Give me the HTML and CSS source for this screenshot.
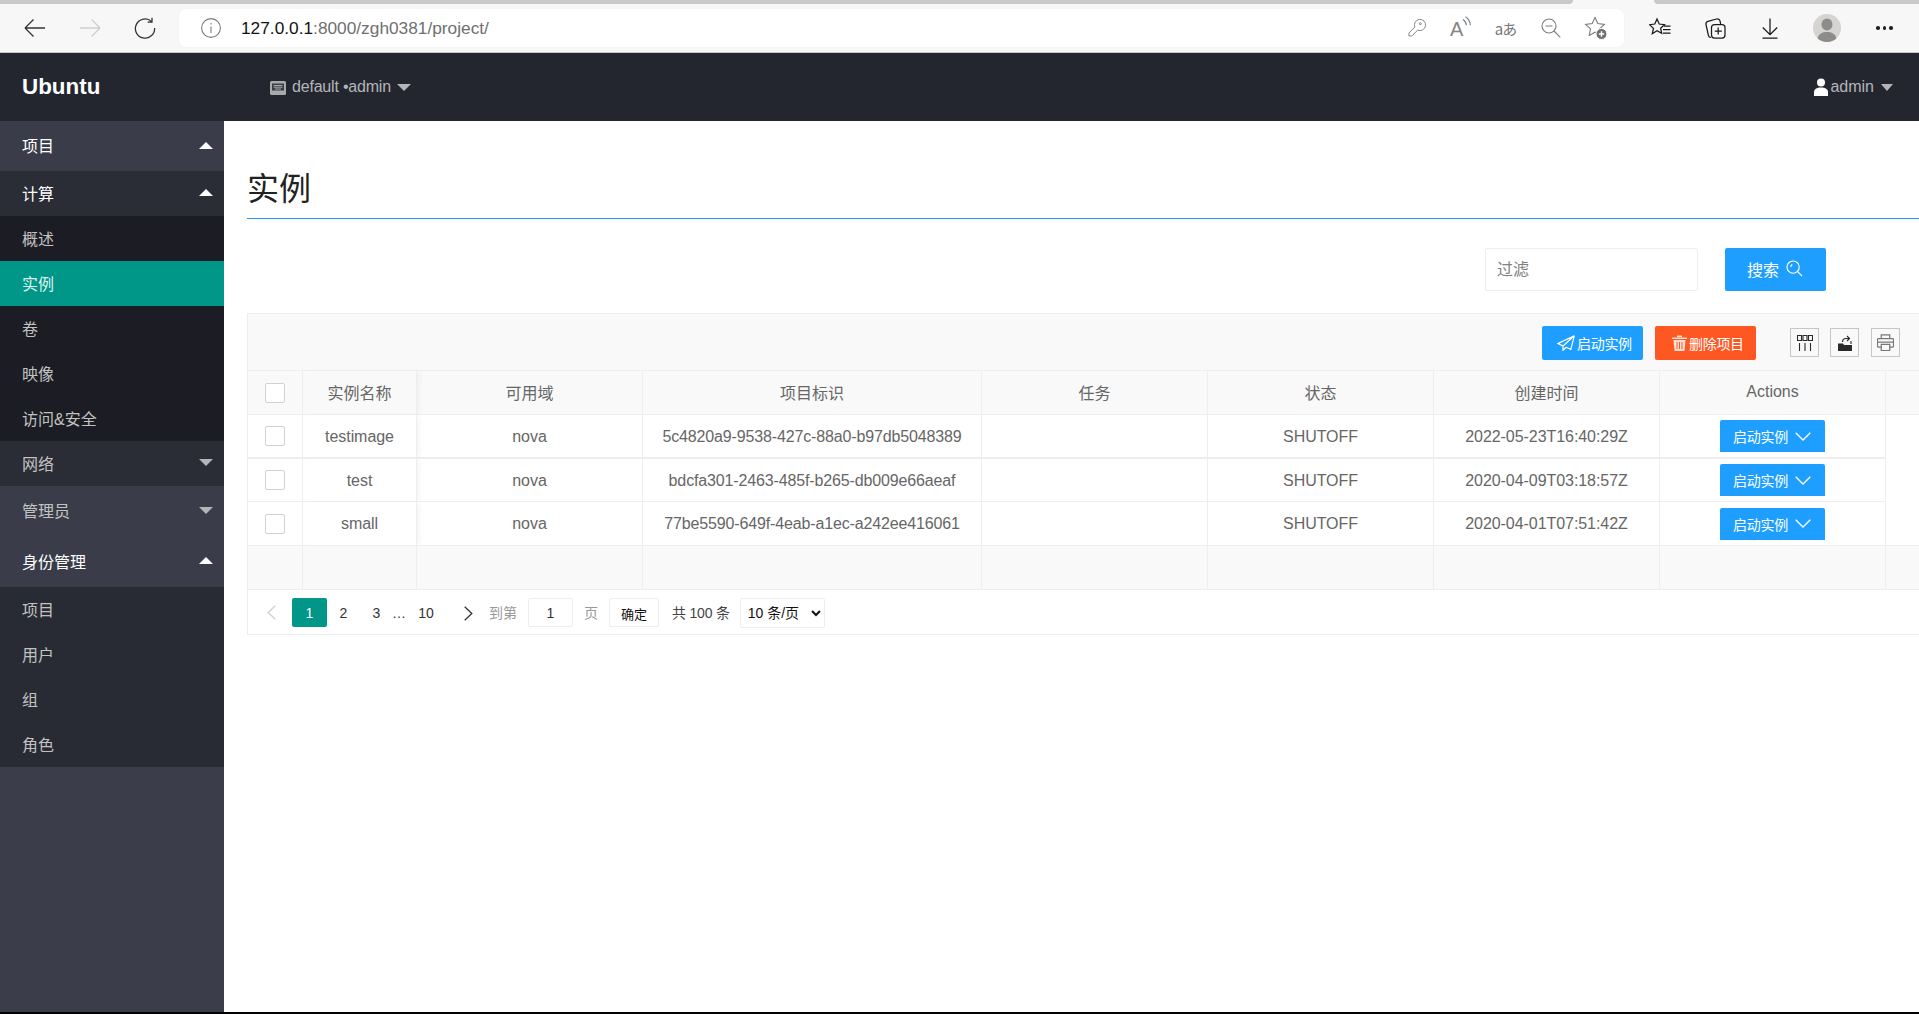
FILE: index.html
```html
<!DOCTYPE html>
<html lang="zh">
<head>
<meta charset="utf-8">
<title>实例</title>
<link rel="stylesheet" href="styles.css">
</head>
<body>
<div class="page">
  <div class="browser">
    <div class="tabstrip"><div class="tab-l"></div><div class="tab-gap"></div><div class="tab-r"></div></div>
    <div class="toolbar">
      <span class="nav"><svg class="ic22" viewBox="0 0 22 22"><path class="st-dark" d="M1 11h20M1 11l8.500-8.500M1 11l8.500 8.500"/></svg></span>
      <span class="nav"><svg class="ic22" viewBox="0 0 22 22"><path class="st-off" d="M1 11h20M21 11l-8.500-8.500M21 11l-8.500 8.500"/></svg></span>
      <span class="nav"><svg class="ic22" viewBox="0 0 22 22"><path class="st-dark" d="M17.600 4.600A9.600 9.600 0 1 0 20.600 11M18 .8v4.400h-4.400"/></svg></span>
      <div class="omnibox">
        <svg class="ic20 info" viewBox="0 0 20 20"><circle class="st-grey" cx="10" cy="10" r="9.400"/><path class="st-grey" d="M10 8.500v6.500M10 5v1.400"/></svg>
        <span class="url"><b>127.0.0.1</b>:8000/zgh0381/project/</span>
        <span class="omni-ic"><svg class="ic20" viewBox="0 0 24 24"><path class="st-grey" d="M10.600 10.900a6.700 6.700 0 1 1 3.500 3.600L7 21.500H3.500V18z"/><circle class="st-grey" cx="17.200" cy="6.800" r="1.200"/></svg></span>
        <span class="omni-ic"><svg class="ic24" viewBox="0 0 24 24"><text class="aloud" x="1" y="20">A</text><path class="st-grey" d="M14 3.500c2.100 1.400 3.200 3.300 3.400 5.800M16.500.8c3 2 4.600 4.800 4.900 8.500"/></svg></span>
        <span class="omni-ic translate">aあ</span>
        <span class="omni-ic"><svg class="ic20" viewBox="0 0 20 20"><circle class="st-grey" cx="8" cy="8" r="7"/><path class="st-grey" d="M4.500 8h7M13 13l6.300 6.300"/></svg></span>
        <span class="omni-ic"><svg class="ic24" viewBox="0 0 24 24"><path class="st-grey" d="M11 1.500 13.800 7.600 20.400 8.400 15.500 12.900 16.800 19.400 11 16.200 5.200 19.400 6.500 12.900 1.600 8.400 8.200 7.600z"/><circle class="badge" cx="17.500" cy="18" r="5.500"/><path class="st-white" d="M14.800 18h5.400M17.500 15.300v5.400"/></svg></span>
      </div>
      <span class="nav first"><svg class="ic22" viewBox="0 0 22 22"><path class="st-black" d="M8 2 10.200 7 15.500 7.600 11.600 11.200 12.700 16.400 8 13.800 3.300 16.700 4.500 11.400.5 7.700 5.800 7zM15 9h6.500M14 12.500h7.500M14 16h7.500"/></svg></span>
      <span class="nav"><svg class="ic22" viewBox="0 0 22 22"><rect class="st-black" x="7.500" y="7.500" width="13.500" height="13.500" rx="3"/><path class="st-black" d="M14.200 10.500v7M10.800 14h7M7 20.500c-1.500-.1-2.300-1-2.600-2.200L2 7.500c-.3-1.500.5-2.800 2-3.200L12.500 2c1.700-.4 3.200.5 3.600 2.200l.5 2.800"/></svg></span>
      <span class="nav"><svg class="ic22" viewBox="0 0 22 22"><path class="st-black" d="M11 1.500v16M3.800 10.500l7.200 7.200 7.200-7.200M3.500 21h15"/></svg></span>
      <span class="nav avatar-wrap"><svg class="avatar" viewBox="0 0 28 28"><circle class="av-bg" cx="14" cy="14" r="14"/><ellipse class="av-fg" cx="14" cy="10.500" rx="5.500" ry="6"/><path class="av-fg" d="M4.600 24.500c1-5 5-6.500 9.400-6.500s8.400 1.500 9.400 6.500A14 14 0 0 1 14 28a14 14 0 0 1-9.400-3.500z"/></svg></span>
      <span class="nav dots"><i></i><i></i><i></i></span>
    </div>
  </div>

  <header class="topbar">
    <div class="logo">Ubuntu</div>
    <div class="proj">
      <svg class="kbd" viewBox="0 0 16 14"><rect class="kbd-a" x="0" y="0" width="16" height="14" rx="1.500"/><rect class="kbd-b" x="2" y="2.500" width="12" height="7"/><path class="kbd-c" d="M3.500 4.500h9M3.500 6.200h9M5 8h6"/></svg>
      <span class="proj-name">default •admin</span><i class="caret down"></i>
    </div>
    <div class="user">
      <svg class="usr" viewBox="0 0 14 18"><circle cx="7" cy="4.500" r="4"/><path d="M0 18v-3.500C0 11 2.500 9.500 7 9.500s7 1.500 7 5V18z"/></svg>
      <span>admin</span><i class="caret down small"></i>
    </div>
  </header>

  <div class="body">
    <nav class="side">
      <div class="group g-a h50 open">项目<i class="caret up"></i></div>
      <div class="group g-b h45 open">计算<i class="caret up"></i></div>
      <div class="sub s-dark">
        <a>概述</a><a class="on">实例</a><a>卷</a><a>映像</a><a>访问&amp;安全</a>
      </div>
      <div class="group g-b h45">网络<i class="caret down"></i></div>
      <div class="group g-a h50">管理员<i class="caret down"></i></div>
      <div class="group g-a h51 open">身份管理<i class="caret up"></i></div>
      <div class="sub s-mid">
        <a>项目</a><a>用户</a><a>组</a><a>角色</a>
      </div>
    </nav>

    <main class="main">
      <h1 class="title">实例</h1>

      <form class="search">
        <input class="filter" type="text" placeholder="过滤">
        <button class="btn-search" type="button">搜索<svg class="ic17" viewBox="0 0 18 18"><circle class="st-w" cx="7.500" cy="7.500" r="6.500"/><path class="st-w" d="M12.200 12.200l4.800 4.800M5 7.500c0-1.200.6-2.200 1.700-2.600"/></svg></button>
      </form>

      <section class="card">
        <div class="tools">
          <button class="tbtn blue" type="button"><svg class="plane" viewBox="0 0 18 16"><path class="st-w" d="M17.300.8.900 8.600l5.100 2.500zM17.300.8 6 11.100v4.200l3.300-3M17.300.8 13.800 14.500 9.300 12.300"/></svg>启动实例</button>
          <button class="tbtn orange" type="button"><svg class="trash" viewBox="0 0 15 16"><path class="fill-w" d="M0 2.500h15v1.500H0zM5 .5h5v1.500H5z"/><path class="fill-w" d="M1.500 5h12l-1 11h-10zM4.500 7v7h1V7zm2.500 0v7h1V7zm2.500 0v7h1V7z"/></svg>删除项目</button>
          <span class="ibtn first"><svg class="ic16" viewBox="0 0 16 16"><path class="st-ink" d="M.5.500h4v5h-4zM6 .500h4v5H6zM11.500.500h4v5h-4zM2.500 8v8M8 8v8M13.500 8v8"/></svg></span>
          <span class="ibtn"><svg class="ic16" viewBox="0 0 16 16"><path class="fill-ink" d="M1 8.500h5l1 1.500h8v6H1z"/><path class="st-ink" d="M5.500 7c0-2 1.200-3.500 3.500-3.500h3M10 1l2.500 2.500L10 6M14 9V6"/></svg></span>
          <span class="ibtn wide"><svg class="ic17" viewBox="0 0 18 18"><path class="st-print" d="M4.500 5V1h9v4M4.500 14H1.500c-.6 0-1-.4-1-1V6c0-.6.4-1 1-1h15c.6 0 1 .4 1 1v7c0 .6-.4 1-1 1h-3"/><path class="st-print" d="M4.500 11h9v6.500h-9zM.5 8.500h17"/></svg></span>
        </div>

        <table class="grid">
          <colgroup>
            <col class="c-check"><col class="c-name"><col class="c-wide"><col class="c-id"><col class="c-wide"><col class="c-wide"><col class="c-wide"><col class="c-wide"><col class="c-gut">
          </colgroup>
          <thead>
            <tr class="tall">
              <th><span class="cb"></span></th><th class="fix">实例名称</th><th>可用域</th><th>项目标识</th><th>任务</th><th>状态</th><th>创建时间</th><th>Actions</th><th class="gut"></th>
            </tr>
          </thead>
          <tbody>
            <tr class="tall thick">
              <td class="ctl"><span class="cb"></span></td><td class="fix">testimage</td><td>nova</td><td class="uuid">5c4820a9-9538-427c-88a0-b97db5048389</td><td></td><td>SHUTOFF</td><td>2022-05-23T16:40:29Z</td>
              <td class="ctl"><button class="rbtn" type="button">启动实例<svg class="chev" viewBox="0 0 16 9"><path d="M.7.7 8 8l7.300-7.300"/></svg></button></td><td class="blank"></td>
            </tr>
            <tr class="short">
              <td class="ctl"><span class="cb"></span></td><td class="fix">test</td><td>nova</td><td class="uuid">bdcfa301-2463-485f-b265-db009e66aeaf</td><td></td><td>SHUTOFF</td><td>2020-04-09T03:18:57Z</td>
              <td class="ctl"><button class="rbtn" type="button">启动实例<svg class="chev" viewBox="0 0 16 9"><path d="M.7.7 8 8l7.300-7.300"/></svg></button></td><td class="blank"></td>
            </tr>
            <tr class="tall">
              <td class="ctl"><span class="cb"></span></td><td class="fix">small</td><td>nova</td><td class="uuid">77be5590-649f-4eab-a1ec-a242ee416061</td><td></td><td>SHUTOFF</td><td>2020-04-01T07:51:42Z</td>
              <td class="ctl"><button class="rbtn" type="button">启动实例<svg class="chev" viewBox="0 0 16 9"><path d="M.7.7 8 8l7.300-7.300"/></svg></button></td><td class="blank last"></td>
            </tr>
            <tr class="tall empty">
              <td></td><td></td><td></td><td></td><td></td><td></td><td></td><td></td><td></td>
            </tr>
          </tbody>
        </table>

        <div class="pager">
          <span class="pg-prev"><svg class="pg-arrow" viewBox="0 0 9 15"><path class="st-off" d="M8.300.8 1.200 7.500l7.100 6.700"/></svg></span>
          <span class="pg cur">1</span>
          <span class="pg w33">2</span>
          <span class="pg w33">3</span>
          <span class="pg w12">…</span>
          <span class="pg w42">10</span>
          <span class="pg w42"><svg class="pg-arrow" viewBox="0 0 9 15"><path class="st-dark" d="M.7.800 7.800 7.500.7 14.200"/></svg></span>
          <span class="lbl goto">到第</span>
          <input class="pg-input" type="text" value="1">
          <span class="lbl ye">页</span>
          <button class="pg-ok" type="button">确定</button>
          <span class="total">共 100 条</span>
          <select class="pg-size"><option>10 条/页</option></select>
        </div>
      </section>
    </main>
  </div>
  <div class="baseline"></div>
</div>
</body>
</html>
```

FILE: styles.css
```css
* { box-sizing: border-box; }
html, body { margin: 0; padding: 0; height: 100%; overflow: hidden; background: #fff; }
body { font-family: "Liberation Sans", "Noto Sans CJK SC", sans-serif; font-size: 16px; color: #666; }
.page { display: flex; flex-direction: column; height: 1014px; width: 1919px; }

/* browser chrome */
.browser { flex: 0 0 53px; background: #f7f7f7; border-bottom: 1px solid #c6c6c6; display: flex; flex-direction: column; }
.tabstrip { flex: 0 0 4px; display: flex; }
.tab-l, .tab-r { background: #c9c9c9; }
.tab-l { flex: 0 0 1573px; border-bottom-right-radius: 5px; }
.tab-gap { flex: 0 0 81px; }
.tab-r { flex: 1; border-bottom-left-radius: 5px; }
.toolbar { flex: 1; display: flex; align-items: center; padding-left: 7px; }
.nav { flex: 0 0 55px; height: 30px; display: flex; align-items: center; justify-content: center; }
.nav.first { margin-left: 8px; }
.avatar-wrap { flex-basis: 60px; }
.ic22 { width: 22px; height: 22px; }
.ic24 { width: 24px; height: 24px; }
.ic20 { width: 20px; height: 20px; }
.ic17 { width: 17px; height: 17px; }
.ic16 { width: 16px; height: 16px; }
svg path, svg circle, svg rect { fill: none; }
.st-dark { stroke: #333; stroke-width: 1.3; }
.st-off { stroke: #cfcfcf; stroke-width: 1.3; }
.st-grey { stroke: #7c7c7c; stroke-width: 1.1; }
.st-black { stroke: #1a1a1a; stroke-width: 1.25; }
.st-white { stroke: #fff; stroke-width: 1.4; }
.st-w { stroke: #fff; stroke-width: 1.2; }
.st-ink { stroke: #2b2b2b; stroke-width: 1.1; }
.st-print { stroke: #777; stroke-width: 1.3; }
svg .badge { fill: #6f6f6f; stroke: #fff; stroke-width: 1; }
svg .fill-w { fill: #ffe0d2; }
svg .fill-ink { fill: #2b2b2b; }
.omnibox { flex: 0 0 1445px; margin-left: 7px; height: 38px; background: #fff; border-radius: 7px; display: flex; align-items: center; padding: 0 6px 0 22px; box-shadow: 0 0 2px rgba(0,0,0,.05); }
.url { flex: 1; margin-left: 20px; font-size: 17.300px; color: #6f6f6f; white-space: nowrap; }
.url b { font-weight: 400; color: #111; }
.omni-ic { flex: 0 0 45px; display: flex; align-items: center; justify-content: center; }
.aloud { font-family: "Liberation Sans", sans-serif; font-size: 20px; fill: #858585; }
.translate { font-family: "Noto Sans CJK JP", sans-serif; font-size: 15px; letter-spacing: -1px; color: #777; }
.avatar { width: 28px; height: 28px; }
svg .av-bg { fill: #d5d4d2; }
svg .av-fg { fill: #8d8c88; }
.dots { gap: 3px; }
.dots i { width: 3.500px; height: 3.500px; border-radius: 50%; background: #222; }

/* top bar */
.topbar { flex: 0 0 68px; background: #23262f; display: flex; align-items: center; color: #b4b5b8; }
.logo { flex: 0 0 270px; padding-left: 22px; font-size: 22.400px; font-weight: 700; color: #fff; }
.proj { display: flex; align-items: center; }
.proj-name { letter-spacing: -.2px; }
.kbd { width: 16px; height: 14px; margin: 2px 6px 0 0; }
svg .kbd-a { fill: #a9aaac; }
svg .kbd-b { fill: #3a3c44; }
.kbd-c { stroke: #c9c9c9; stroke-width: .8; }
.user { margin-left: auto; padding-right: 26px; display: flex; align-items: center; }
.usr { width: 14px; height: 18px; margin-right: 2px; }
svg.usr circle, svg.usr path { fill: #fff; }
.caret { display: inline-block; width: 0; height: 0; border-left: 7px solid transparent; border-right: 7px solid transparent; }
.caret.down { border-top: 7px solid #b4b5b8; }
.caret.up { border-bottom: 7px solid #fff; }
.topbar .caret { margin-left: 6px; margin-top: 1px; }
.topbar .caret.small { border-left-width: 6px; border-right-width: 6px; margin-left: 7px; }

/* sidebar */
.body { flex: 1; display: flex; min-height: 0; }
.side { flex: 0 0 224px; background: #3b3e4a; display: flex; flex-direction: column; }
.group { display: flex; align-items: center; justify-content: space-between; padding: 0 11px 2px 22px; font-size: 16px; color: #c2c2c2; flex: none; }
.group.open { color: #fff; }
.g-a { background: #3a3d49; }
.g-b { background: #2a2c36; }
.h50 { height: 50px; } .h45 { height: 45px; } .h51 { height: 51px; }
.sub { display: flex; flex-direction: column; flex: none; }
.sub a { height: 45px; display: flex; align-items: center; padding: 0 0 1px 22px; color: #c2c2c2; font-size: 16px; }
.s-dark { background: #1c1d24; }
.s-mid { background: #292b34; }
.sub a.on { background: #009688; color: #dff2ef; }

/* main */
.main { flex: 1; min-width: 0; background: #fff; }
.title { margin: 48px 0 0 23px; height: 50px; padding-bottom: 9px; border-bottom: 1px solid #1e9fff; font-size: 32px; line-height: 40px; font-weight: 400; color: #222; }
.search { display: flex; justify-content: flex-end; gap: 27px; margin-top: 29px; padding-right: 93px; }
.filter { width: 213px; height: 43px; border: 1px solid #eee; border-radius: 2px; padding: 1px 11px 0; font: 16px "Liberation Sans", "Noto Sans CJK SC", sans-serif; color: #666; outline: 0; }
.filter::placeholder { color: #808080; opacity: 1; }
.btn-search { width: 101px; height: 43px; border: 0; border-radius: 2px; background: #1e9fff; color: #fff; font: 16px "Liberation Sans", "Noto Sans CJK SC", sans-serif; display: flex; align-items: center; gap: 7px; padding: 0 0 2px 22px; }
.card { margin: 22px 0 0 23px; border-left: 1px solid #eee; border-bottom: 1px solid #eee; }
.tools { height: 58px; background: #f9f9f9; border-top: 1px solid #eee; border-bottom: 1px solid #eee; display: flex; align-items: center; justify-content: flex-end; padding: 1px 19px 0 0; }
.tbtn { width: 101px; height: 34px; border: 0; border-radius: 2px; color: #fff; font: 14px "Liberation Sans", "Noto Sans CJK SC", sans-serif; letter-spacing: -.3px; display: flex; align-items: center; }
.tbtn.blue { background: #1e9fff; padding: 0 0 0 15px; gap: 2px; }
.tbtn.orange { background: #ff5722; margin-left: 12px; padding: 0 0 0 17px; gap: 2px; }
.plane { width: 18px; height: 16px; }
.trash { width: 15px; height: 16px; }
.ibtn { width: 29px; height: 29px; margin-left: 11px; border: 1px solid #c6c6c6; display: flex; align-items: center; justify-content: center; }
.ibtn.first { margin-left: 34px; }
.ibtn.wide { margin-left: 12px; }

/* table */
.grid { width: 1671px; border-collapse: separate; border-spacing: 0; table-layout: fixed; font-size: 16px; color: #666; }
.c-check { width: 55px; } .c-name { width: 114px; } .c-wide { width: 226px; } .c-id { width: 339px; } .c-gut { width: 33px; }
.grid th, .grid td { padding: 0; text-align: center; font-weight: 400; vertical-align: middle; border-right: 1px solid #eee; border-bottom: 1px solid #eee; background: #fff; white-space: nowrap; }
.grid td { letter-spacing: -.06px; padding-top: 1px; }
.grid td.ctl { padding-top: 0; }
.grid td.uuid { letter-spacing: -.14px; }
.grid th { background: #f9f9f9; padding-bottom: 2px; }
.grid th:first-child { padding-bottom: 0; }
.grid th:last-child, .empty td:last-child { border-right: 0; }
.tall th, .tall td { height: 44px; }
.short td { height: 43px; }
.thick td { border-bottom-width: 2px; }
.grid td.blank { border-right: 0; border-bottom: 0; }
.grid td.blank.last { border-bottom: 1px solid #eee; }
.grid .empty td { background: #f9f9f9; }
.fix { position: relative; z-index: 1; box-shadow: 4px 0 6px -2px rgba(0,0,0,.05); }
.cb { display: block; width: 20px; height: 20px; margin: 0 auto; border: 1px solid #d2d2d2; border-radius: 2px; background: #fff; }
.rbtn { width: 105px; height: 32px; margin: 0 auto; border: 0; border-radius: 2px 2px 0 0; background: #1e9fff; color: #fff; font: 14px "Liberation Sans", "Noto Sans CJK SC", sans-serif; letter-spacing: -.3px; display: flex; align-items: center; justify-content: center; gap: 7px; padding: 0 1px 0 0; }
.chev { width: 16px; height: 9px; }
.chev path { stroke: #fff; stroke-width: 1.300; }

/* pager */
.pager { height: 44px; display: flex; align-items: flex-start; padding: 8px 0 0 19px; font-size: 14px; color: #333; }
.pg-prev { flex: 0 0 25px; height: 29px; display: flex; align-items: center; }
.pg-arrow { width: 9px; height: 15px; }
.pg { height: 29px; display: flex; align-items: center; justify-content: center; padding-top: 1px; }
.cur { width: 35px; background: #009688; color: #fff; border-radius: 2px; }
.w33 { width: 33px; } .w12 { width: 12px; } .w42 { width: 42px; }
.lbl { height: 29px; line-height: 31px; color: #999; }
.goto { width: 29px; }
.pg-input { width: 45px; height: 29px; margin-left: 10px; border: 1px solid #eee; border-radius: 2px; padding: 0; text-align: center; font: 14px "Liberation Sans", sans-serif; color: #333; outline: 0; }
.ye { margin-left: 11px; }
.pg-ok { width: 50px; height: 29px; margin-left: 11px; border: 1px solid #eee; border-radius: 2px; background: #fff; padding: 1px 0 0; color: #111; font: 13px "Liberation Sans", "Noto Sans CJK SC", sans-serif; }
.total { margin-left: 13px; height: 29px; line-height: 31px; color: #444; letter-spacing: -.2px; }
.pg-size { width: 85px; height: 30px; margin-left: 10px; border: 1px solid #eee; border-radius: 2px; background: #fff; padding: 0 0 0 3px; font: 14px "Liberation Sans", "Noto Sans CJK SC", sans-serif; color: #111; outline: 0; }

.baseline { flex: 0 0 2px; background: #000; }
```
